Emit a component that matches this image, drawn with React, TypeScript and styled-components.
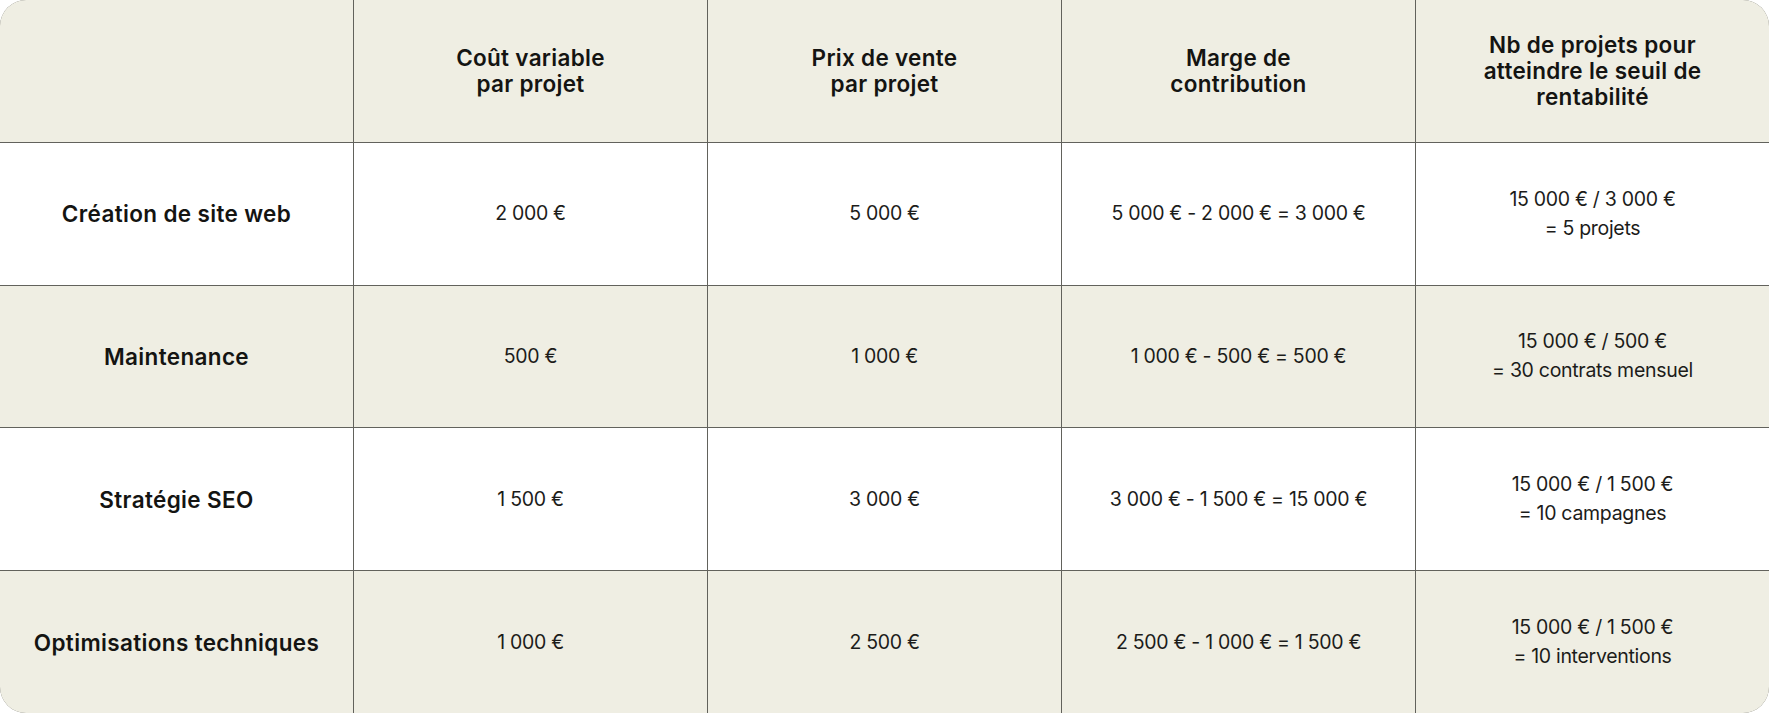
import React from 'react';
import styled, { createGlobalStyle } from 'styled-components';

const GlobalStyle = createGlobalStyle`
  html, body {
    margin: 0;
    padding: 0;
    background: #fff;
  }
  body {
    font-family: Inter, "Noto Sans", "Liberation Sans", sans-serif;
    color: #141412;
  }
`;

const Table = styled.div`
  width: 1769px;
  height: 713px;
  display: grid;
  grid-template-columns: repeat(5, 1fr);
  grid-template-rows: repeat(5, 1fr);
  gap: 1px;
  background: #62625c;
  border-radius: 26px;
  overflow: hidden;
`;

type CellProps = {
  $shaded: boolean
}

const Cell = styled.div<CellProps>`
  display: flex;
  flex-direction: column;
  align-items: center;
  justify-content: center;
  text-align: center;
  background: ${(props) => props.$shaded ? '#efeee3' : '#ffffff'};
`;

const HeadText = styled.div`
  font-size: 22.5px;
  font-weight: 600;
  line-height: 26px;
  letter-spacing: 0.3px;
  white-space: pre-line;
`;

const RowLabel = styled.div`
  font-size: 22.5px;
  font-weight: 600;
  letter-spacing: 0.35px;
`;

const Value = styled.div`
  font-size: 19.5px;
  font-weight: 400;
  line-height: 29px;
  letter-spacing: -0.3px;
  color: #1c1c1a;
`;

const headers = [
  '',
  'Coût variable\npar projet',
  'Prix de vente\npar projet',
  'Marge de\ncontribution',
  'Nb de projets pour\natteindre le seuil de\nrentabilité',
];

type Row = {
  label: string
  cost: string
  price: string
  margin: string
  breakEven: string[]
}

const rows: Row[] = [
  {
    label: 'Création de site web',
    cost: '2 000 €',
    price: '5 000 €',
    margin: '5 000 € - 2 000 € = 3 000 €',
    breakEven: ['15 000 € / 3 000 €', '= 5 projets'],
  },
  {
    label: 'Maintenance',
    cost: '500 €',
    price: '1 000 €',
    margin: '1 000 € - 500 € = 500 €',
    breakEven: ['15 000 € / 500 €', '= 30 contrats mensuel'],
  },
  {
    label: 'Stratégie SEO',
    cost: '1 500 €',
    price: '3 000 €',
    margin: '3 000 € - 1 500 € = 15 000 €',
    breakEven: ['15 000 € / 1 500 €', '= 10 campagnes'],
  },
  {
    label: 'Optimisations techniques',
    cost: '1 000 €',
    price: '2 500 €',
    margin: '2 500 € - 1 000 € = 1 500 €',
    breakEven: ['15 000 € / 1 500 €', '= 10 interventions'],
  },
];

export default function App() {
  return (
    <>
      <GlobalStyle/>
      <Table>
        {headers.map((h, i) => (
          <Cell key={`h${i}`} $shaded>
            <HeadText>{h}</HeadText>
          </Cell>
        ))}
        {rows.map((row, i) => {
          const shaded = i % 2 === 1;
          return (
            <React.Fragment key={row.label}>
              <Cell $shaded={shaded}><RowLabel>{row.label}</RowLabel></Cell>
              <Cell $shaded={shaded}><Value>{row.cost}</Value></Cell>
              <Cell $shaded={shaded}><Value>{row.price}</Value></Cell>
              <Cell $shaded={shaded}><Value>{row.margin}</Value></Cell>
              <Cell $shaded={shaded}>
                {row.breakEven.map((line) => <Value key={line}>{line}</Value>)}
              </Cell>
            </React.Fragment>
          );
        })}
      </Table>
    </>
  );
}
